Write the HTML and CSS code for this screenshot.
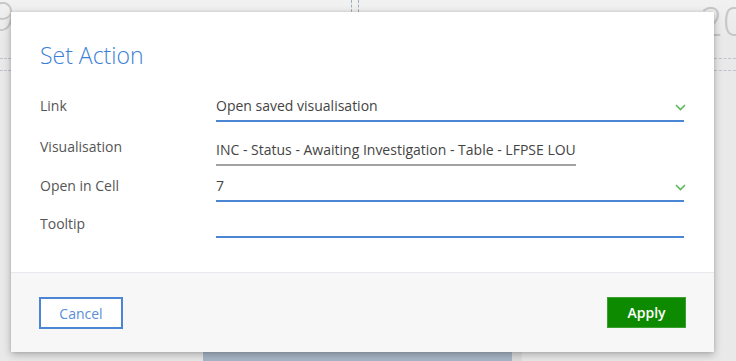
FILE: index.html
```html
<!DOCTYPE html>
<html>
<head>
<meta charset="utf-8">
<link rel="stylesheet" href="styles.css">
</head>
<body>
<div class="stage">
  <div class="backdrop">
    <span class="bg-num bg-num-left">9</span>
    <span class="bg-num bg-num-right">20</span>
    <div class="dash dash-l1"></div>
    <div class="dash dash-l2"></div>
    <div class="dash dash-r1"></div>
    <div class="dash dash-r2"></div>
    <div class="vdash vdash-1"></div>
    <div class="vdash vdash-2"></div>
    <div class="bottom-block"></div>
    <div class="bottom-mid"></div>
  </div>

  <div class="dialog">
    <div class="dialog-body">
      <h1 class="title">Set Action</h1>
      <div class="form">
        <div class="row row-link">
          <div class="label">Link</div>
          <div class="field field-select">
            <span class="value">Open saved visualisation</span>
            <svg class="chev" width="11" height="7" viewBox="0 0 11 7"><path d="M1 1 L5.5 5.5 L10 1" fill="none" stroke="#5cb85c" stroke-width="1.6"/></svg>
          </div>
        </div>
        <div class="row row-vis">
          <div class="label">Visualisation</div>
          <div class="field field-static">
            <span class="value">INC - Status - Awaiting Investigation - Table - LFPSE LOU</span>
          </div>
        </div>
        <div class="row row-cell">
          <div class="label">Open in Cell</div>
          <div class="field field-select">
            <span class="value">7</span>
            <svg class="chev" width="11" height="7" viewBox="0 0 11 7"><path d="M1 1 L5.5 5.5 L10 1" fill="none" stroke="#5cb85c" stroke-width="1.6"/></svg>
          </div>
        </div>
        <div class="row row-tip">
          <div class="label label-tip">Tooltip</div>
          <div class="field field-input"><span class="value">&nbsp;</span></div>
        </div>
      </div>
    </div>
    <div class="dialog-footer">
      <button class="btn btn-cancel">Cancel</button>
      <button class="btn btn-apply">Apply</button>
    </div>
  </div>
</div>
</body>
</html>
```

FILE: styles.css
```css
* { box-sizing: border-box; }
html, body { margin: 0; padding: 0; }
body {
  width: 736px;
  height: 361px;
  overflow: hidden;
  font-family: "Open Sans", "Liberation Sans", sans-serif;
  background: #ececec;
}
.stage {
  position: relative;
  width: 736px;
  height: 361px;
  overflow: hidden;
  background: linear-gradient(#f1f1f1, #e9e9e9 40px, #e9e9e9);
}
.backdrop { position: absolute; inset: 0; }
.bg-num {
  position: absolute;
  font-family: "Open Sans", sans-serif;
  font-size: 40px;
  font-weight: 300;
  color: #c6c6c6;
  line-height: 1;
}
.bg-num-left { left: -8px; top: -4px; }
.bg-num-right { left: 700px; top: 1px; }
.dash {
  position: absolute;
  height: 1px;
  border-top: 1px dashed #bfc4cc;
}
.dash-l1 { left: 0; width: 11px; top: 58px; }
.dash-l2 { left: 0; width: 11px; top: 70px; }
.dash-r1 { left: 714px; width: 22px; top: 58px; }
.dash-r2 { left: 714px; width: 22px; top: 70px; }
.vdash {
  position: absolute;
  top: 0;
  height: 12px;
  width: 1px;
  border-left: 1px dashed #9fb0bc;
}
.vdash-1 { left: 351px; }
.vdash-2 { left: 358px; }
.bottom-block {
  position: absolute;
  left: 203px;
  width: 309px;
  top: 340px;
  height: 30px;
  background: #a9b7c8;
}
.bottom-mid {
  position: absolute;
  left: 512px;
  width: 10px;
  top: 340px;
  height: 30px;
  background: #dedede;
}

.dialog {
  position: absolute;
  left: 11px;
  top: 12px;
  width: 703px;
  height: 340px;
  background: #fff;
  box-shadow: 0 3px 8px rgba(0,0,0,0.25), 0 0 3px rgba(0,0,0,0.12);
  display: flex;
  flex-direction: column;
}
.dialog-body {
  flex: 1;
  padding: 29px 30px 0 29px;
}
.title {
  margin: 0;
  font-size: 23px;
  line-height: 28px;
  font-weight: 300;
  color: #3c7fd6;
  letter-spacing: 0;
}
.form {
  margin-top: 27px;
  display: flex;
  flex-direction: column;
}
.row {
  display: grid;
  grid-template-columns: 176px 1fr;
  align-items: start;
}
.row-vis { margin-top: 18px; }
.row-cell { margin-top: 10px; }
.row-tip { margin-top: 10px; }
.label {
  font-size: 14px;
  line-height: 20px;
  color: #555;
}
.row-vis .label { margin-top: -3px; }
.label-tip { margin-top: 2px; }
.field {
  position: relative;
  font-size: 14px;
  line-height: 20px;
  color: #444;
  padding-bottom: 4px;
  border-bottom: 2px solid #4a86d3;
}
.field-static {
  justify-self: start;
  border-bottom-color: #a3a3a3;
}
.chev {
  position: absolute;
  right: -2px;
  top: 8px;
}
.dialog-footer {
  height: 80px;
  background: #f7f7f7;
  border-top: 1px solid #e6e9ee;
  padding: 24px 28px 0 28px;
  display: flex;
  justify-content: space-between;
  align-items: flex-start;
}
.btn {
  font-family: "Open Sans", "Liberation Sans", sans-serif;
  font-size: 14px;
  height: 32px;
  margin: 0;
  padding: 0;
  cursor: pointer;
}
.btn-cancel {
  width: 84px;
  background: #fff;
  color: #5b8fd7;
  border: 2px solid #4a86d3;
}
.btn-apply {
  width: 79px;
  height: 31px;
  background: #0e8a00;
  color: #fff;
  border: 1px solid #3aa02e;
  font-weight: 600;
}
```
